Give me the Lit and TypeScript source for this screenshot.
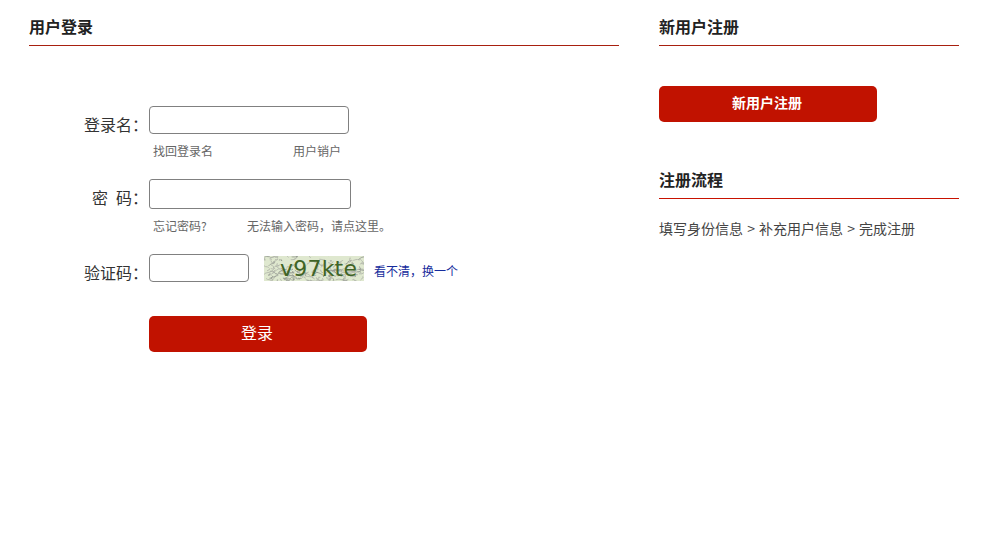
import { LitElement, html, css, svg } from "lit";
import { customElement } from "lit/decorators.js";

function noise() {
  let s = 97;
  const r = (n: number) => {
    s = (s * 16807) % 2147483647;
    return (s % 1000) / 1000 * n;
  };
  const out = [];
  for (let i = 0; i < 190; i++) {
    let x = r(100), y = r(25);
    if (i % 2 && x > 15 && x < 85) y = 14 + r(11);
    let d = `M${x.toFixed(1)} ${y.toFixed(1)}`;
    const dx = r(3) - 1, dy = r(2) - 1;
    for (let j = 0; j < 4; j++) {
      x += dx + r(3) - 1.5;
      y += dy + r(2) - 1;
      d += `L${x.toFixed(1)} ${y.toFixed(1)}`;
    }
    out.push(svg`<path d=${d} fill="none" stroke=${i % 3 ? "#aeb2a8" : "#92978e"} stroke-width="0.8" />`);
  }
  return out;
}

@customElement("app-root")
export class AppRoot extends LitElement {
  static styles = css`
    :host {
      display: block;
      width: 988px;
      height: 543px;
      background: #fff;
      color: #333;
      font-family: "Noto Sans CJK SC", "Liberation Sans", sans-serif;
      overflow: hidden;
    }
    .page { display: flex; gap: 40px; padding: 0 29px; }
    .left { width: 590px; }
    .right { width: 300px; }
    .title {
      margin: 0;
      height: 45px;
      border-bottom: 1px solid #a8200f;
      font-size: 16px;
      font-weight: 700;
      line-height: 24px;
      color: #222;
    }
    .title span { display: block; padding-top: 14px; }
    .form { margin-top: 60px; }
    .row { display: flex; align-items: flex-start; height: 28px; }
    .row.tall { height: 30px; }
    .label {
      box-sizing: border-box;
      width: 121px;
      margin-left: -1px;
      height: 28px;
      text-align: right;
      font-size: 16px;
      line-height: 24px;
      padding: 6px 1px 0 0;
      white-space: pre;
      flex: none;
    }
    .input {
      box-sizing: border-box;
      display: block;
      margin: 0;
      padding: 0;
      width: 200px;
      height: 28px;
      border: 1px solid #808080;
      border-radius: 4px;
      background: #fff;
    }
    .input.pw { width: 202px; height: 30px; border-radius: 3px; }
    .input.code { width: 100px; }
    .help {
      display: flex;
      margin-left: 124px;
      padding-top: 8px;
      height: 37px;
      font-size: 12px;
      line-height: 18px;
      color: #666;
      white-space: pre;
    }
    .help .a { width: 140px; }
    .help .b { width: 94px; }
    .captcha { display: block; margin: 2px 0 0 15px; flex: none; }
    .refresh {
      margin: 8px 0 0 10px;
      font-size: 12px;
      line-height: 18px;
      color: #162c9c;
    }
    .btn {
      display: block;
      box-sizing: border-box;
      width: 218px;
      height: 36px;
      margin: 0;
      padding: 0 2px 4px 0;
      border: 0;
      border-radius: 5px;
      background: #c11200;
      color: #fff;
      font-family: inherit;
      text-align: center;
    }
    .login { margin: 34px 0 0 120px; font-size: 16px; }
    .signup { margin-top: 40px; font-size: 14px; font-weight: 700; }
    .process { margin-top: 45px; }
    .process .title { height: 31px; border-bottom-color: #c81200; }
    .process .title span { padding-top: 0; }
    .steps {
      margin: 19px 0 0;
      font-size: 14px;
      line-height: 20px;
      color: #444;
      white-space: pre;
      word-spacing: 1px;
    }
  `;

  render() {
    return html`
      <div class="page">
        <section class="left">
          <h2 class="title"><span>用户登录</span></h2>
          <div class="form">
            <div class="row">
              <div class="label">登录名：</div>
              <input class="input" type="text" />
            </div>
            <div class="help"><span class="a">找回登录名</span><span>用户销户</span></div>
            <div class="row tall">
              <div class="label">密&ensp;码：</div>
              <input class="input pw" type="password" />
            </div>
            <div class="help"><span class="b">忘记密码?</span><span>无法输入密码，请点这里。</span></div>
            <div class="row">
              <div class="label">验证码：</div>
              <input class="input code" type="text" />
              <svg class="captcha" width="100" height="25" viewBox="0 0 100 25">
                <rect width="100" height="25" fill="#dfe8cf" />
                ${noise()}
                <text x="16" y="20" font-family="DejaVu Sans" font-size="22" fill="#3f6426" textLength="77">v97kte</text>
              </svg>
              <div class="refresh">看不清，换一个</div>
            </div>
            <button class="btn login">登录</button>
          </div>
        </section>
        <aside class="right">
          <h2 class="title"><span>新用户注册</span></h2>
          <button class="btn signup">新用户注册</button>
          <div class="process">
            <h2 class="title"><span>注册流程</span></h2>
            <p class="steps">填写身份信息 &gt; 补充用户信息 &gt; 完成注册</p>
          </div>
        </aside>
      </div>
    `;
  }
}
